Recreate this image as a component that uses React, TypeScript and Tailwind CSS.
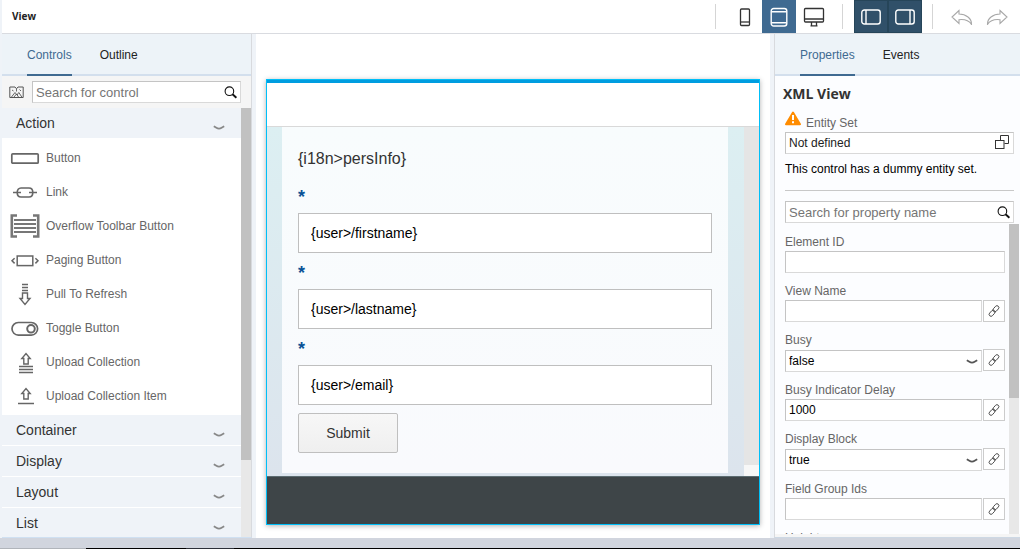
import React from "react";

const Chevron = ({ className = "" }: { className?: string }) => (
  <svg className={className} width="12" height="6" viewBox="0 0 12 6" fill="none" stroke="currentColor" strokeWidth="1.7">
    <path d="M0.8 1.2 L3.4 2.8 C5 3.9 7 3.9 8.6 2.8 L11.2 1.2" />
  </svg>
);

const SearchIcon = ({ className = "" }: { className?: string }) => (
  <svg className={className} width="14" height="14" viewBox="0 0 14 14" fill="none" stroke="#111">
    <circle cx="5.4" cy="5.2" r="4.3" strokeWidth="1.1" />
    <path d="M8.5 8.3 L12.4 11.8" strokeWidth="1.9" />
  </svg>
);

const LinkIcon = () => (
  <svg width="12" height="12" viewBox="0 0 12 12" fill="none" stroke="#444" strokeWidth="0.9">
    <rect x="4.4" y="1.9" width="7" height="3.8" rx="1.9" transform="rotate(-48 7.9 3.8)" />
    <rect x="0.6" y="6.3" width="7" height="3.8" rx="1.9" transform="rotate(-48 4.1 8.2)" />
  </svg>
);

const g = { fill: "none", stroke: "#666" };

const icons: Record<string, React.ReactNode> = {
  Button: <rect x="1.8" y="10.8" width="26.4" height="9.4" rx="1" {...g} strokeWidth="1.7" />,
  Link: (
    <g {...g} strokeWidth="1.6">
      <path d="M11 11 H19 C21.4 11 22.8 12.8 22.8 15.5 C22.8 18.2 21.4 20 19 20 H11 C8.6 20 7.2 18.2 7.2 15.5 C7.2 12.8 8.6 11 11 11 Z" />
      <path d="M3 15.5 H11 M19 15.5 H27" />
    </g>
  ),
  "Overflow Toolbar Button": (
    <g fill="none" stroke="#777">
      <path d="M7 4.5 H1.8 V25.5 H7 M23 4.5 H28.2 V25.5 H23" strokeWidth="2.6" />
      <path d="M4 9 H26 M4 13 H26 M4 17 H26 M4 21 H26" strokeWidth="1.8" />
    </g>
  ),
  "Paging Button": (
    <g {...g} strokeWidth="1.5">
      <rect x="7.2" y="11" width="15.6" height="9.6" />
      <path d="M4.6 13.2 L2 15.8 L4.6 18.4 M25.4 13.2 L28 15.8 L25.4 18.4" strokeWidth="1.5" />
    </g>
  ),
  "Pull To Refresh": (
    <g {...g} strokeWidth="1.4">
      <path d="M12 5.5 H18 M12 8.5 H18 M12 11.5 H18" />
      <path d="M12.5 14 H17.5 V19.5 H20 L15 25.5 L10 19.5 H12.5 Z" />
    </g>
  ),
  "Toggle Button": (
    <g {...g} strokeWidth="1.7">
      <rect x="2" y="9.5" width="25.6" height="12.6" rx="6.3" />
      <circle cx="21" cy="15.8" r="3.8" strokeWidth="2" />
    </g>
  ),
  "Upload Collection": (
    <g {...g} strokeWidth="1.4">
      <path d="M13.8 17 V11.5 H11.8 L16 6.5 L20.2 11.5 H18.2 V17 Z" />
      <path d="M9 19.5 H23 M9 22.5 H23 M9 25.5 H23" strokeWidth="1.5" />
    </g>
  ),
  "Upload Collection Item": (
    <g {...g} strokeWidth="1.4">
      <path d="M13.8 18 V12.5 H11.8 L16 7.5 L20.2 12.5 H18.2 V18 Z" />
      <path d="M8 22.5 H24" strokeWidth="1.5" />
    </g>
  ),
};

const controls = Object.keys(icons);

function Section({ name }: { name: string }) {
  return (
    <button className="flex h-[30px] w-full shrink-0 items-center justify-between bg-[#eff3f8] pr-4 pl-[14px] text-left text-sm text-[#333]">
      {name}
      <Chevron className="mt-[9px] text-[#888]" />
    </button>
  );
}

function Tabs({ items }: { items: string[] }) {
  return (
    <nav className="flex h-[42px] shrink-0 gap-7 border-b-2 border-[#d3dfed] bg-[#edf3f8] pl-[25px] text-xs text-[#222]">
      {items.map((t, i) => (
        <button
          key={t}
          className={i === 0 ? "-mb-[2px] border-b-2 border-[#3f6a91] pt-[2px] text-[#3f6a91]" : "-mb-[2px] border-b-2 border-transparent pt-[2px]"}
        >
          {t}
        </button>
      ))}
    </nav>
  );
}

const box = "h-[22px] w-full min-w-0 border border-[#d9d9d9] border-t-[#c4c4c4] border-l-[#c4c4c4] bg-white px-[3px] outline-none";

function Property({ label, value = "", options, bind = true }: { label: string; value?: string; options?: string[]; bind?: boolean }) {
  const id = label.toLowerCase().replaceAll(" ", "-");
  return (
    <div className="mb-[9px] shrink-0">
      <label htmlFor={id} className="block h-[18px] text-xs leading-[18px] text-[#666]">
        {label}
      </label>
      <div className="flex items-start gap-px">
        {options ? (
          <div className="relative mt-px min-w-0 flex-1">
            <select id={id} defaultValue={value} className={box + " block appearance-none text-xs text-black"}>
              {options.map((o) => (
                <option key={o}>{o}</option>
              ))}
            </select>
            <Chevron className="pointer-events-none absolute top-[9px] right-1 text-[#555]" />
          </div>
        ) : (
          <input id={id} defaultValue={value} className={box + " flex-1 text-xs text-black"} />
        )}
        {bind && (
          <button aria-label={"Bind " + label} className="flex h-[22px] w-[22px] shrink-0 items-center justify-center border border-[#ccc] bg-white">
            <LinkIcon />
          </button>
        )}
      </div>
    </div>
  );
}

const Sep = ({ className = "" }: { className?: string }) => <div className={"h-[25px] w-px bg-[#d5d5d5] " + className} />;

function Toolbar() {
  const btn = "flex h-[33px] w-[34px] items-center justify-center ";
  return (
    <header className="flex h-[34px] shrink-0 items-center justify-between border-b border-[#d9dbe0] bg-white pr-[6px] pl-[10px]">
      <h1 className="font-['Open_Sans',sans-serif] text-[10px] font-bold text-[#222]">View</h1>
      <div className="flex items-center">
        <Sep className="mr-3" />
        <button aria-label="Phone" className={btn}>
          <svg width="12" height="20" viewBox="0 0 12 20" fill="none" stroke="#333" strokeWidth="1.3">
            <rect x="1.5" y="2" width="9" height="16.5" rx="1" />
            <path d="M1.5 15 H10.5" />
          </svg>
        </button>
        <button aria-label="Tablet" className={btn + "bg-[#3f6a91]"}>
          <svg width="18" height="20" viewBox="0 0 18 20" fill="none" stroke="#fff" strokeWidth="1.4">
            <rect x="1.2" y="1.5" width="15.6" height="17.5" rx="2.5" />
            <path d="M1.2 4.8 H16.8 M1.2 15.8 H16.8" />
          </svg>
        </button>
        <button aria-label="Desktop" className={btn + "ml-px"}>
          <svg width="22" height="20" viewBox="0 0 22 20" fill="none" stroke="#333" strokeWidth="1.3">
            <rect x="1.5" y="1.5" width="19" height="13.5" rx="1" />
            <path d="M1.5 12 H20.5 M8.5 15 V19 M13.5 15 V19 M7.5 18.8 H14.5" />
          </svg>
        </button>
        <Sep className="mr-[11px] ml-[11px]" />
        <button aria-label="Left panel" className={btn + "border border-[#264559] bg-[#305069]"}>
          <svg width="20" height="16" viewBox="0 0 20 16" fill="none" stroke="#fff" strokeWidth="1.4">
            <rect x="0.8" y="1" width="18.4" height="14" rx="2.5" />
            <path d="M5 1 V15" />
          </svg>
        </button>
        <button aria-label="Right panel" className={btn + "border border-[#264559] bg-[#305069]"}>
          <svg width="20" height="16" viewBox="0 0 20 16" fill="none" stroke="#fff" strokeWidth="1.4">
            <rect x="0.8" y="1" width="18.4" height="14" rx="2.5" />
            <path d="M15 1 V15" />
          </svg>
        </button>
        <Sep className="mr-3 ml-[10px]" />
        <button aria-label="Undo" className={btn}>
          <svg width="22" height="16" viewBox="0 0 22 16" fill="none" stroke="#a8a8a8" strokeWidth="1.1">
            <path d="M8 1.5 L1 8 L8 14.5 V10.7 C13 10.1 17.5 11 20.5 15.4 C20.8 9.4 15 5 8 5 Z" />
          </svg>
        </button>
        <button aria-label="Redo" className={btn + "ml-px"}>
          <svg width="22" height="16" viewBox="0 0 22 16" fill="none" stroke="#a8a8a8" strokeWidth="1.1">
            <path d="M14 1.5 L21 8 L14 14.5 V10.7 C9 10.1 4.5 11 1.5 15.4 C1.2 9.4 7 5 14 5 Z" />
          </svg>
        </button>
      </div>
    </header>
  );
}

function ControlsPanel() {
  return (
    <aside className="flex w-[250px] shrink-0 flex-col border-r border-b border-r-[#d8dade] border-b-[#cfe0f2] bg-white">
      <Tabs items={["Controls", "Outline"]} />
      <div className="flex h-8 shrink-0 items-center bg-[#f5f5f5] pr-[10px] pl-[7px]">
        <svg width="15" height="13" viewBox="0 0 15 13" fill="none" stroke="#555" strokeWidth="1">
          <path d="M6 1 H0.8 V11.5 H14.2 V1 H9 M6 1 L7.5 2.8 L9 1" />
          <path d="M7.5 3 V5.5 M2.5 11 L6 6.5 L8 9 L9.8 6.5 L12.8 11 M3 4 L4.5 5 M10.5 3.5 L12 5 M5 11 L7.5 8 L9.5 11" strokeWidth="0.9" />
        </svg>
        <div className="relative ml-2 flex-1">
          <input aria-label="Search for control" placeholder="Search for control" className={box + " block text-[13px] placeholder:text-[#757575]"} />
          <SearchIcon className="absolute top-[5px] right-[3px]" />
        </div>
      </div>
      <div className="flex min-h-0 flex-1">
        <div className="flex min-w-0 flex-1 flex-col overflow-hidden">
          <Section name="Action" />
          <ul className="shrink-0 pt-[3px] pb-[2px]">
            {controls.map((c) => (
              <li key={c} className="flex h-[34px] items-center gap-[6px] pl-2 text-xs text-[#666]">
                <svg width="30" height="30" viewBox="0 0 30 30">
                  {icons[c]}
                </svg>
                {c}
              </li>
            ))}
          </ul>
          <div className="flex shrink-0 flex-col gap-px">
            {["Container", "Display", "Layout", "List"].map((s) => (
              <Section key={s} name={s} />
            ))}
          </div>
        </div>
        <div className="w-[10px] bg-[#e8e8e8]">
          <div className="h-[82%] bg-[#c1c1c1]" />
        </div>
      </div>
    </aside>
  );
}

function Canvas() {
  return (
    <main className="flex min-w-0 flex-1 flex-col bg-white px-[10px] pt-[45px] pb-[13px]">
      <div className="flex min-h-0 flex-1 flex-col border border-[#00bff8] shadow-[0_1px_5px_rgba(0,0,0,0.3)]">
        <div className="h-[47px] shrink-0 border-t-3 border-b border-t-[#009de0] border-b-[#d9d9d9] bg-white" />
        <div className="flex min-h-0 flex-1">
          <div className="flex min-w-0 flex-1 flex-col bg-linear-to-b from-[#dceff2] to-[#dce4ed] pr-4 pb-[3px] pl-[15px]">
            <form className="flex-1 bg-linear-to-b from-[#f8fcfd] to-[#f9fafd] px-4 pt-5" onSubmit={(e) => e.preventDefault()}>
              <h2 className="mb-3 h-6 text-base leading-6 text-[#333]">{"{i18n>persInfo}"}</h2>
              {["firstname", "lastname", "email"].map((f) => (
                <div key={f} className="mb-[6px]">
                  <label htmlFor={f} className="mb-[2px] block h-7 text-lg leading-7 font-bold text-[#0a5296]">
                    *
                  </label>
                  <input
                    id={f}
                    defaultValue={"{user>/" + f + "}"}
                    className="block h-10 w-full border border-[#bfbfbf] bg-white px-3 text-sm text-black outline-none"
                  />
                </div>
              ))}
              <button className="mt-[2px] h-10 w-[100px] rounded-[2px] border border-[#bfbfbf] bg-linear-to-b from-[#f7f7f7] to-[#efefef] text-sm text-[#333]">
                Submit
              </button>
            </form>
          </div>
          <div className="flex w-[15px] flex-col bg-[#e5e5e5]">
            <div className="mt-auto h-[11px] bg-[#f7f7f7]" />
          </div>
        </div>
        <div className="h-12 shrink-0 border-t border-[#5c6c71] bg-[#3e4548]" />
      </div>
    </main>
  );
}

function PropertiesPanel() {
  return (
    <aside className="flex w-[246px] shrink-0 flex-col border-b border-l border-b-[#cdd8e4] border-l-[#d8dade] bg-[#fcfdff]">
      <Tabs items={["Properties", "Events"]} />
      <div className="shrink-0 pr-[6px] pl-[10px]">
        <h2 className="-ml-[2px] mt-2 h-5 font-['Open_Sans',sans-serif] text-sm leading-5 font-bold text-[#333]">XML View</h2>
        <div className="mt-[6px] flex h-[22px]">
          <svg width="16" height="18" viewBox="0 0 16 18">
            <path d="M8 2.5 L15 14.2 H1 Z" fill="#ff8c00" stroke="#ff8c00" strokeWidth="2" strokeLinejoin="round" />
            <path d="M8 5 V10 M8 11.3 V13.3" stroke="#fff" strokeWidth="2" />
          </svg>
          <label htmlFor="entity-set" className="ml-[5px] pt-1 text-xs leading-[18px] text-[#666]">
            Entity Set
          </label>
        </div>
        <div className="relative">
          <input id="entity-set" defaultValue="Not defined" className={box + " block text-xs text-[#222]"} />
          <svg className="absolute top-[3px] right-[4px]" width="15" height="15" viewBox="0 0 15 15" fill="none" stroke="#333" strokeWidth="1">
            <path d="M5.5 5.5 V0.5 H13.5 V8.5 H9.5" />
            <rect x="0.5" y="5.5" width="8.5" height="8" />
          </svg>
        </div>
        <p className="mt-[6px] border-b border-[#c8c8c8] pb-3 text-xs leading-[18px] text-black">This control has a dummy entity set.</p>
        <div className="relative mt-[10px]">
          <input aria-label="Search for property name" placeholder="Search for property name" className={box + " block text-[13px] placeholder:text-[#757575]"} />
          <SearchIcon className="absolute top-[5px] right-[3px]" />
        </div>
      </div>
      <div className="mt-px mr-px flex min-h-0 flex-1">
        <div className="flex min-w-0 flex-1 flex-col overflow-hidden pt-[9px] pr-1 pl-[10px]">
          <Property label="Element ID" bind={false} />
          <Property label="View Name" />
          <Property label="Busy" value="false" options={["false", "true"]} />
          <Property label="Busy Indicator Delay" value="1000" />
          <Property label="Display Block" value="true" options={["true", "false"]} />
          <Property label="Field Group Ids" />
          <Property label="Height" />
        </div>
        <div className="w-[10px] bg-[#e8e8e8]">
          <div className="h-[56%] bg-[#c1c1c1]" />
        </div>
      </div>
      <div className="h-[3px] shrink-0 bg-[#f5f5f5]" />
    </aside>
  );
}

export default function App() {
  return (
    <div className="flex h-screen flex-col overflow-hidden bg-[#eff3f8] font-['Liberation_Sans',Arial,sans-serif]">
      <div className="flex min-h-0 flex-1 flex-col pl-[2px]">
        <Toolbar />
        <div className="flex min-h-0 flex-1 gap-1">
          <ControlsPanel />
          <Canvas />
          <PropertiesPanel />
        </div>
      </div>
      <div className="h-[10px] shrink-0 bg-[#d1d5de]" />
      <div className="flex h-px shrink-0 bg-black">
        <div className="w-[86px] bg-[#b0b4ba]" />
        <div className="ml-[100px] w-12 bg-[#2c2f38]" />
      </div>
    </div>
  );
}
